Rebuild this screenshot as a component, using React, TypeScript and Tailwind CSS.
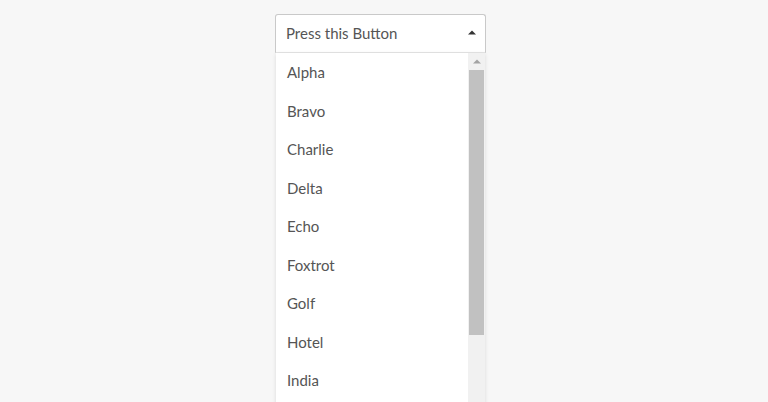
import React from "react";

const items = [
  "Alpha",
  "Bravo",
  "Charlie",
  "Delta",
  "Echo",
  "Foxtrot",
  "Golf",
  "Hotel",
  "India",
];

export default function App() {
  return (
    <div
      className="h-screen w-full overflow-hidden bg-[#f7f7f7] pt-[14px] pl-[275px]"
      style={{ fontFamily: "Lato, 'Open Sans', sans-serif" }}
    >
      <div className="relative w-[211px]">
        <button className="flex h-[39px] w-full items-center justify-between rounded-t-[3px] border border-[#c9c9c9] border-b-[#e6e6e6] bg-white pb-[1px] pl-[10px] pr-[9px] text-left text-[15px] text-[#555]">
          <span>Press this Button</span>
          <svg width="8" height="5" viewBox="0 0 8 5" className="mb-[1px]">
            <path d="M0 4.5 L4 0.5 L8 4.5 Z" fill="#333" />
          </svg>
        </button>
        <div className="absolute left-px top-full flex h-[360px] w-[209px] overflow-hidden bg-white shadow-[0_1px_4px_rgba(0,0,0,0.12)]">
          <ul className="flex-1">
            {items.map((it) => (
              <li
                key={it}
                className="flex h-[38.5px] items-center pl-[11px] text-[15px] text-[#555]"
              >
                {it}
              </li>
            ))}
          </ul>
          <div className="flex w-[17px] flex-col bg-[#f1f1f1]">
            <div className="flex h-[17px] items-center justify-center">
              <svg width="8" height="5" viewBox="0 0 8 5">
                <path d="M0 4.5 L4 0.5 L8 4.5 Z" fill="#a3a3a3" />
              </svg>
            </div>
            <div className="mx-[1px] h-[265px] bg-[#c1c1c1]" />
          </div>
        </div>
      </div>
    </div>
  );
}
